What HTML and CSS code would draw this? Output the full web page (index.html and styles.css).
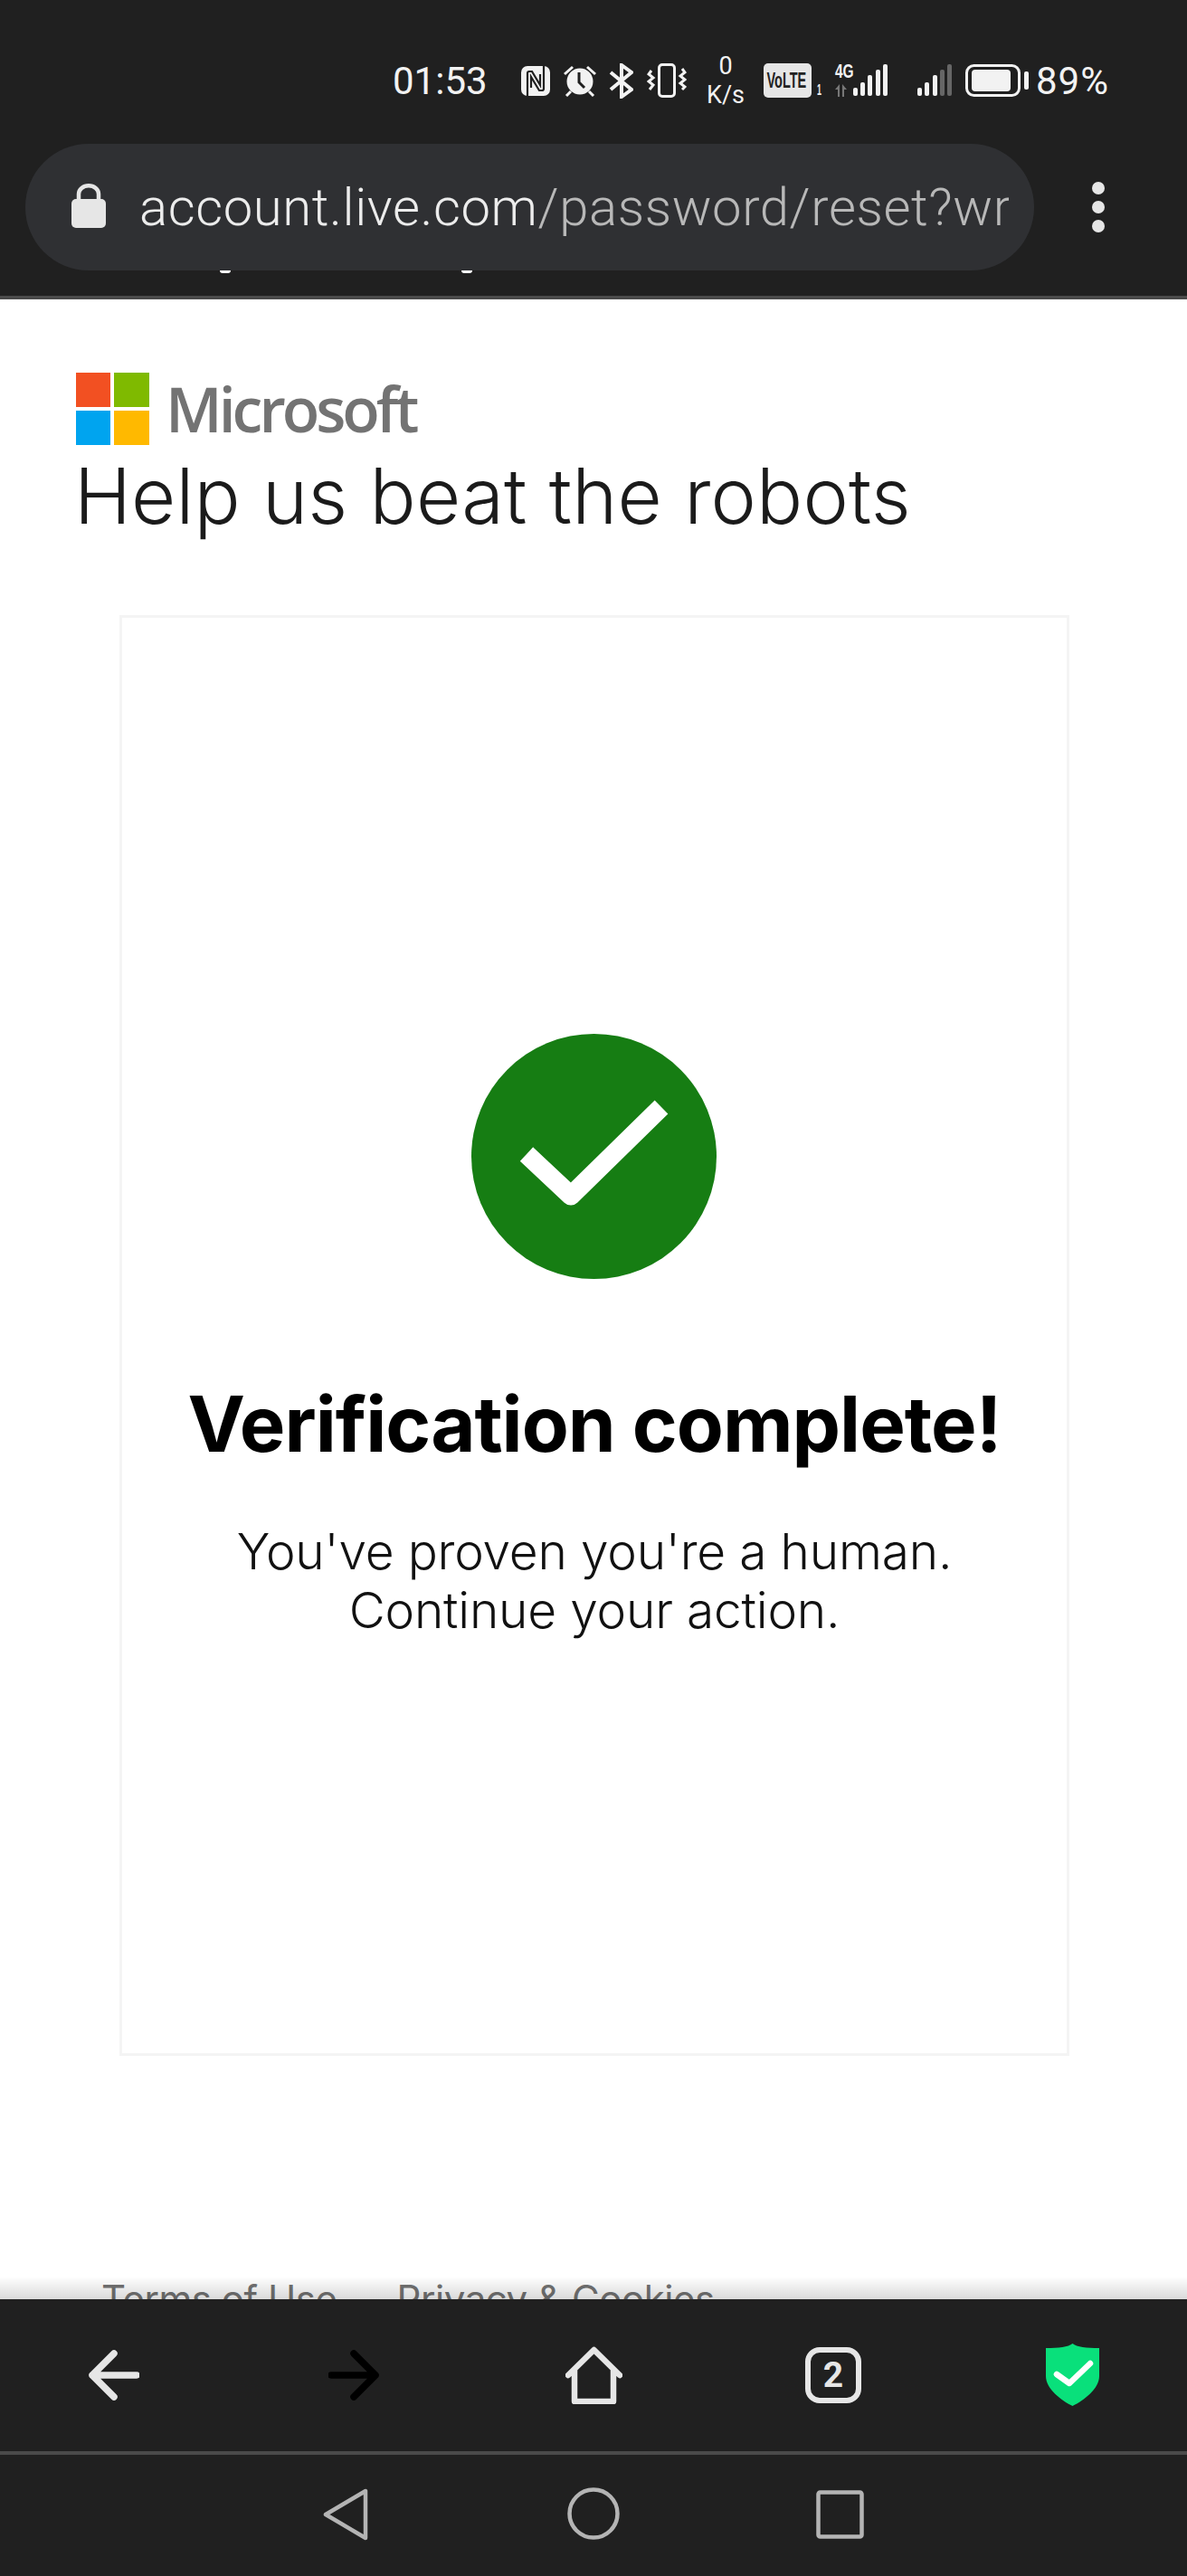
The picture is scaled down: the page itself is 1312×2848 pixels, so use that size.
FILE: index.html
```html
<!DOCTYPE html>
<html lang="en">
<head>
<meta charset="utf-8">
<title>Help us beat the robots</title>
<link rel="stylesheet" href="styles.css">
</head>
<body>
<div class="phone">
  <header class="chrome">
    <div class="status">
      <span class="time">01:53</span>
      <svg class="ic-nfc" viewBox="0 0 32 33"><path fill="#f2f2f2" d="M7 0h18a7 7 0 0 1 7 7v19a7 7 0 0 1-7 7H7a7 7 0 0 1-7-7V7a7 7 0 0 1 7-7z"/><path fill="none" stroke="#202020" stroke-width="2.200" d="M7 33V8a2 2 0 0 1 2-2h3l9 15V9M25 0v25a2 2 0 0 1-2 2h-3L11 12v12"/></svg>
      <svg class="ic-alarm" viewBox="0 0 36 35"><circle cx="18" cy="18" r="14.500" fill="#f2f2f2"/><path fill="none" stroke="#202020" stroke-width="3" d="M17 8v11l6 6"/><path fill="#f2f2f2" d="M0 9 9 1l2 2-9 8zM36 9l-9-8-2 2 9 8z"/><path fill="none" stroke="#f2f2f2" stroke-width="3" d="M3 34l5-5M33 34l-5-5"/></svg>
      <svg class="ic-bt" viewBox="0 0 27 39"><path fill="none" stroke="#f2f2f2" stroke-width="4" d="M2 10l23 19-11 8V2l11 8L2 29"/></svg>
      <svg class="ic-vib" viewBox="0 0 44 38"><rect x="13.500" y="1.500" width="17" height="35" rx="3.500" fill="none" stroke="#f2f2f2" stroke-width="3"/><path fill="none" stroke="#f2f2f2" stroke-width="3" d="M5 8 2 12l5 4-5 4 5 4-4 5M39 6l3 4-5 4 5 4-5 4 5 4-3 3"/></svg>
      <div class="speed"><span>0</span><span>K/s</span></div>
      <svg class="ic-volte" viewBox="0 0 65 38"><rect width="53" height="38" rx="5" fill="#e6e6e6"/><text class="volte" transform="translate(3.500 27) scale(1 1.650)">VoLTE</text><text class="sim" transform="translate(59 35) scale(1 1.900)">1</text></svg>
      <svg class="ic-sig1" viewBox="0 0 60 38"><text class="net" transform="translate(0 16) scale(1 1.430)">4G</text><path fill="#777" d="M5 23v14H3v-8H0zM8 23l5 6h-3v8H8z"/><g fill="#f2f2f2"><rect x="20" y="27" width="5" height="9" rx="2"/><rect x="28" y="21" width="5" height="15" rx="2"/><rect x="36" y="13" width="5" height="23" rx="2"/><rect x="45" y="7" width="5" height="29" rx="2"/><rect x="53" y="1" width="5" height="35" rx="2"/></g></svg>
      <svg class="ic-sig2" viewBox="0 0 39 38"><g fill="#f2f2f2"><rect x="0" y="27" width="5" height="9" rx="2"/><rect x="8" y="21" width="5" height="15" rx="2"/><rect x="17" y="13" width="5" height="23" rx="2"/></g><g fill="#666"><rect x="25" y="7" width="5" height="29" rx="2"/><rect x="33" y="1" width="5" height="35" rx="2"/></g></svg>
      <svg class="ic-bat" viewBox="0 0 70 36"><rect x="1.500" y="1.500" width="58" height="33" rx="8" fill="none" stroke="#f2f2f2" stroke-width="3"/><rect x="7" y="6" width="43" height="24" rx="4" fill="#f2f2f2"/><rect x="65" y="8" width="5" height="20" rx="2" fill="#f2f2f2"/></svg>
      <span class="pct">89%</span>
    </div>
    <div class="toolbar">
      <div class="pill">
        <svg class="ic-lock" viewBox="0 0 38 50"><path fill="none" stroke="#e6e6e6" stroke-width="4.500" d="M8 20v-8.500a11 9.250 0 0 1 22 0V20"/><rect x="0" y="17" width="38" height="32" rx="5" fill="#e6e6e6"/></svg>
        <div class="url"><span class="host">account.live.com</span><span class="path">/password/reset?wreply=https</span></div>
      </div>
      <div class="menu"><i></i><i></i><i></i></div>
      <i class="peek peek-a"></i>
      <i class="peek peek-b"></i>
    </div>
  </header>

  <main class="page">
    <div class="brand">
      <svg class="ms-logo" viewBox="0 0 81 80"><rect width="38" height="38" fill="#f25022"/><rect x="42" width="39" height="38" fill="#7fba00"/><rect y="42" width="38" height="38" fill="#00a4ef"/><rect x="42" y="42" width="39" height="38" fill="#ffb900"/></svg>
      <span class="ms-name">Microsoft</span>
    </div>
    <h1 class="title">Help us beat the robots</h1>
    <section class="card">
      <svg class="tick" viewBox="0 0 271 271"><circle cx="135.500" cy="135.500" r="135.500" fill="#167d13"/><path fill="none" stroke="#fff" stroke-width="21" stroke-linejoin="round" d="M61 133l49 46 100-98"/></svg>
      <h2 class="done">Verification complete!</h2>
      <p class="msg">You've proven you're a human.<br>Continue your action.</p>
    </section>
    <nav class="legal"><a>Terms of Use</a><a>Privacy &amp; Cookies</a></nav>
    <div class="shade"></div>
  </main>

  <div class="bottombar">
    <svg class="ic-back" viewBox="0 0 56 56"><path fill="none" stroke="#e6e6e6" stroke-width="7.500" stroke-linecap="round" stroke-linejoin="round" d="M53 28H4M28 4 4 28l24 24"/></svg>
    <svg class="ic-fwd" viewBox="0 0 56 56"><path fill="none" stroke="#000" stroke-width="7.500" stroke-linecap="round" stroke-linejoin="round" d="M3 28h49M28 4l24 24-24 24"/></svg>
    <svg class="ic-home" viewBox="0 0 63 64"><path fill="none" stroke="#e6e6e6" stroke-width="6.500" stroke-linecap="round" stroke-linejoin="round" d="M3 32 31.500 4 60 32M10 27v34h43V27"/></svg>
    <div class="tabs">2</div>
    <svg class="ic-shield" viewBox="0 0 59 69"><path fill="#09e07b" d="M29.500 0C34 4 45 5 59 5v31C59 50 42 63 29.500 69 17 63 0 50 0 36V5c14 0 25-1 29.500-5z"/><path fill="none" stroke="#fff" stroke-width="6.500" stroke-linecap="round" stroke-linejoin="round" d="M12 34l14 10 23-22"/></svg>
  </div>
  <div class="sysnav">
    <svg class="ic-tri" viewBox="0 0 50 58"><path fill="none" stroke="#b4b4b4" stroke-width="4.500" stroke-linejoin="round" d="M47 3v52L3 29z"/></svg>
    <svg class="ic-circ" viewBox="0 0 58 58"><circle cx="29" cy="29" r="26.500" fill="none" stroke="#b4b4b4" stroke-width="4.500"/></svg>
    <svg class="ic-sq" viewBox="0 0 53 54"><rect x="2.500" y="2.500" width="48" height="49" rx="2" fill="none" stroke="#b4b4b4" stroke-width="4.500"/></svg>
  </div>
</div>
</body>
</html>
```

FILE: styles.css
```css
* { box-sizing: border-box; }
html, body { margin: 0; padding: 0; }
body { background: #fff; font-family: "Inter", "Liberation Sans", sans-serif; }
svg { display: block; flex: none; }

.phone { width: 1312px; height: 2848px; display: flex; flex-direction: column; overflow: hidden; }

/* browser chrome */
.chrome { height: 331px; flex: none; background: #202020; border-bottom: 4px solid #4a4a4a; }
.status { height: 130px; padding: 48px 0 0 434px; display: flex; align-items: center; color: #f2f2f2; font-family: "Roboto", sans-serif; }
.time { width: 104px; font-size: 42px; white-space: nowrap; }
.ic-nfc { width: 32px; height: 33px; margin-left: 38px; }
.ic-alarm { width: 36px; height: 35px; margin-left: 15px; }
.ic-bt { width: 27px; height: 39px; margin-left: 14px; }
.ic-vib { width: 44px; height: 38px; margin-left: 15px; }
.speed { width: 40px; margin-left: 23px; display: flex; flex-direction: column; align-items: center; font-size: 27px; line-height: 32px; white-space: nowrap; }
.ic-volte { width: 65px; height: 38px; margin-left: 22px; overflow: visible; }
.volte { font: bold 14.500px "Liberation Sans", sans-serif; fill: #222; }
.sim { font: bold 9px "Liberation Sans", sans-serif; fill: #f2f2f2; }
.ic-sig1 { width: 60px; height: 38px; margin-left: 14px; overflow: visible; }
.net { font: bold 15.500px "Liberation Sans", sans-serif; fill: #f2f2f2; }
.ic-sig2 { width: 39px; height: 38px; margin-left: 31px; }
.ic-bat { width: 70px; height: 36px; margin-left: 14px; }
.pct { margin-left: 8px; font-size: 42px; letter-spacing: 1px; white-space: nowrap; }

.toolbar { position: relative; height: 197px; padding: 29px 0 0 28px; display: flex; align-items: flex-start; }
.pill { width: 1115px; height: 140px; border-radius: 70px; background: #2f3033; display: flex; align-items: center; padding: 0 28px 0 51px; }
.ic-lock { width: 38px; height: 50px; margin-top: -2px; }
.url { margin-left: 37px; min-width: 0; flex: 1; overflow: hidden; white-space: nowrap; font: 300 58px/80px "Roboto", sans-serif; letter-spacing: .6px; }
.host { color: #ececec; }
.path { color: #b8b8b8; }
.menu { margin: 42px 0 0 64px; width: 15px; display: flex; flex-direction: column; gap: 7px; }
.menu i { width: 14px; height: 14px; border-radius: 50%; background: #e6e6e6; }
.peek { position: absolute; top: 169px; width: 12px; height: 3px; border-radius: 0 0 6px 6px; background: #fff; }
.peek-a { left: 243px; }
.peek-b { left: 510px; }

/* page */
.page { position: relative; flex: 1; min-height: 0; overflow: hidden; background: #fff; padding-top: 81px; }
.brand { display: flex; align-items: center; height: 80px; padding-left: 84px; }
.ms-logo { width: 81px; height: 80px; }
.ms-name { margin-left: 18px; font: 600 68px/80px "Open Sans", sans-serif; color: #737373; letter-spacing: -4px; }
.title { margin: 4px 0 0; padding-left: 82px; font: 300 85px/106px "Inter", sans-serif; color: #1b1b1b; letter-spacing: .2px; }
.card { width: 1050px; height: 1593px; margin: 78px 0 0 132px; border: 3px solid #f4f4f4; padding-top: 460px; display: flex; flex-direction: column; align-items: center; text-align: center; }
.tick { width: 271px; height: 271px; margin-left: -1px; }
.done { margin: 108px 0 0; font: 700 85px/106px "Inter", sans-serif; color: #000; letter-spacing: -1px; white-space: nowrap; }
.msg { margin: 55px 0 0; font: 300 55px/65px "Inter", sans-serif; color: #111; letter-spacing: -.2px; }
.legal { display: flex; gap: 66px; margin: 242px 0 0 112px; font: 400 42px/54px "Inter", sans-serif; color: #737373; letter-spacing: -.45px; }
.shade { position: absolute; left: 0; right: 0; bottom: 0; height: 25px; background: linear-gradient(rgba(0,0,0,0), rgba(0,0,0,.15)); }

/* bottom bars */
.bottombar { position: relative; height: 172px; flex: none; background: #202020; border-bottom: 4px solid #4a4a4a; }
.bottombar > * { position: absolute; }
.ic-back { left: 98px; top: 56px; width: 56px; height: 56px; }
.ic-fwd { left: 363px; top: 56px; width: 56px; height: 56px; }
.ic-home { left: 625px; top: 52px; width: 63px; height: 64px; }
.tabs { left: 890px; top: 53px; width: 62px; height: 62px; border: 6px solid #e6e6e6; border-radius: 16px; color: #e6e6e6; font: bold 39px/50px "Roboto", sans-serif; text-align: center; }
.ic-shield { left: 1156px; top: 49px; width: 59px; height: 69px; }
.sysnav { position: relative; height: 134px; flex: none; background: #202020; }
.sysnav > * { position: absolute; }
.ic-tri { left: 357px; top: 37px; width: 50px; height: 58px; }
.ic-circ { left: 627px; top: 36px; width: 58px; height: 58px; }
.ic-sq { left: 902px; top: 39px; width: 53px; height: 54px; }
```
